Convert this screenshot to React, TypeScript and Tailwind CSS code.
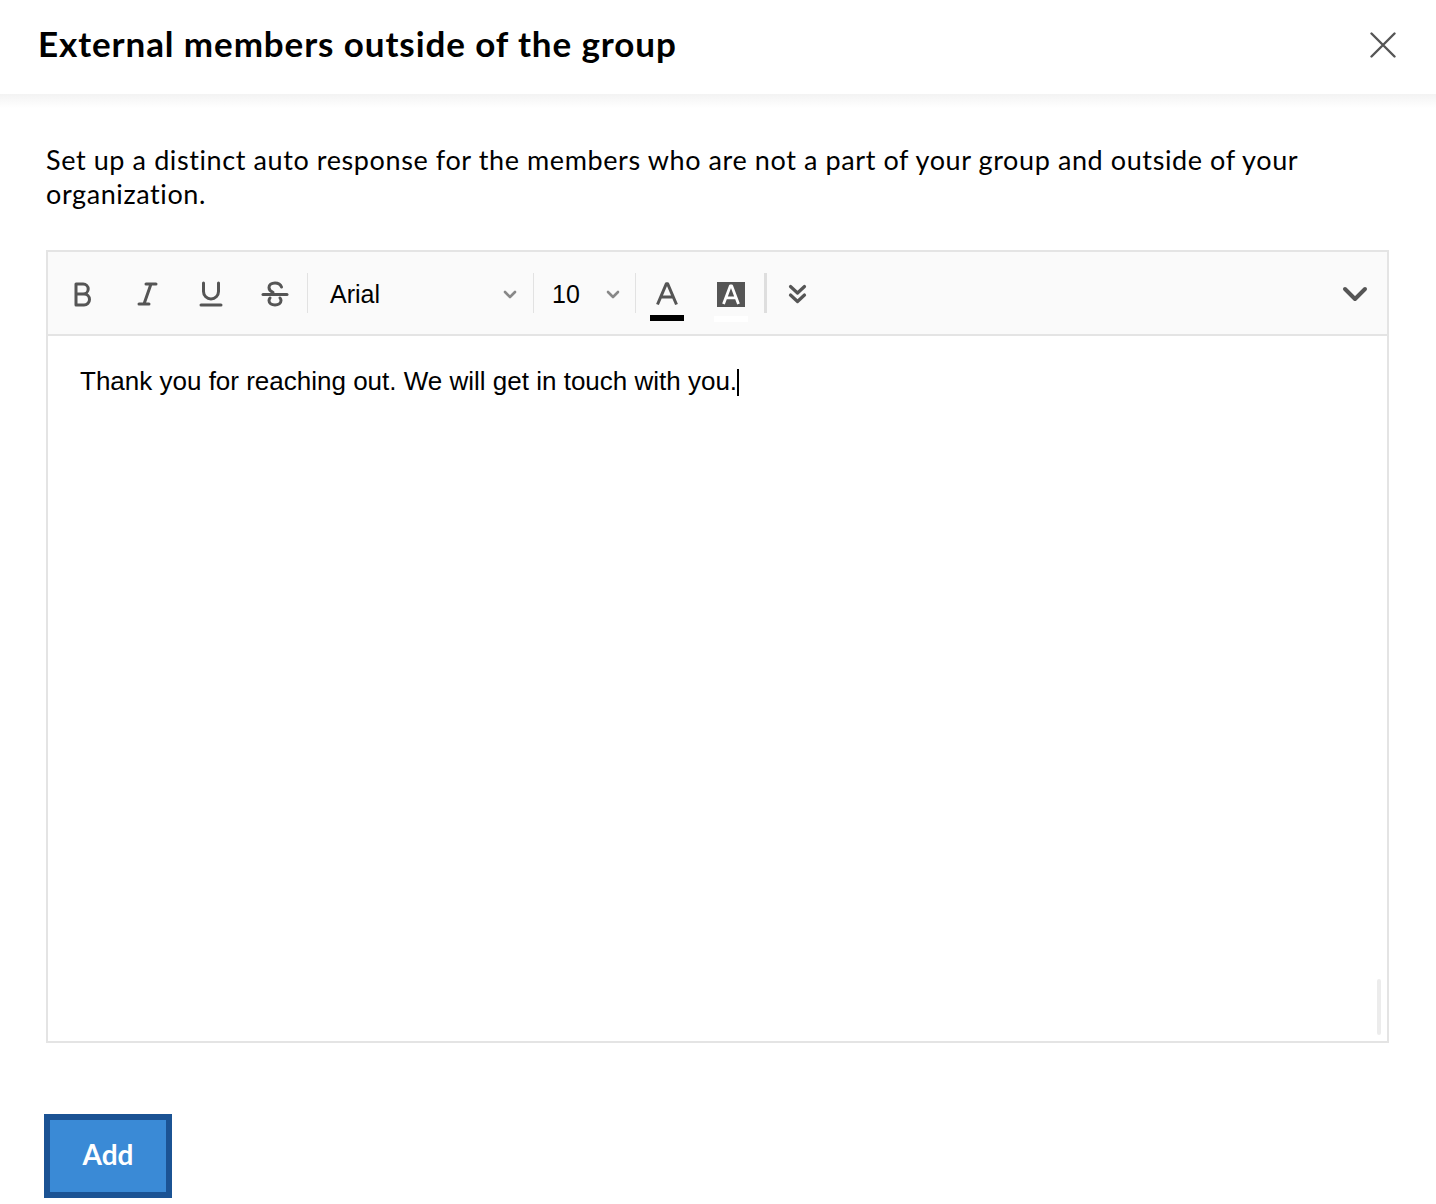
import React from "react";

const gray = "#555555";

const Sep = ({ dark }: { dark?: boolean }) => (
  <div className={dark ? "w-[3px] h-[40px] bg-[#dedede]" : "w-px h-[40px] bg-[#e2e2e2]"} />
);

const SmallChevron = () => (
  <svg width="14" height="9" viewBox="0 0 14 9" fill="none">
    <path d="M2 2l5 5 5-5" stroke="#888" strokeWidth="2.6" strokeLinecap="round" strokeLinejoin="round" />
  </svg>
);

const Toolbar = () => (
  <div className="flex items-center h-[84px] bg-[#fafafa] border-b-2 border-[#e4e4e4] pl-[3px]">
    <button className="w-[64px] h-full flex items-center justify-center pt-[2px]">
      <svg width="20" height="25" viewBox="0 0 20 25" fill="none">
        <path
          d="M3 2v21M3 2h7.2a5 5 0 0 1 0 10H3M3 12h8a5.5 5.5 0 0 1 0 11H3"
          stroke={gray}
          strokeWidth="3"
          strokeLinecap="round"
          strokeLinejoin="round"
        />
      </svg>
    </button>
    <button className="w-[64px] h-full flex items-center justify-center pt-[2px]">
      <svg width="21" height="24" viewBox="0 0 21 24" fill="none">
        <path d="M9 2h10M2 22h10M14 2L7 22" stroke={gray} strokeWidth="3" strokeLinecap="round" />
      </svg>
    </button>
    <button className="w-[64px] h-full flex items-center justify-center pt-[2px]">
      <svg width="24" height="26" viewBox="0 0 24 26" fill="none">
        <path d="M4.5 2v8.5a7.5 7.5 0 0 0 15 0V2" stroke={gray} strokeWidth="3" strokeLinecap="round" />
        <path d="M2 24h20" stroke={gray} strokeWidth="3" strokeLinecap="round" />
      </svg>
    </button>
    <button className="w-[64px] h-full flex items-center justify-center pt-[2px]">
      <svg width="28" height="26" viewBox="0 0 28 26" fill="none">
        <path
          d="M20.5 6C19.5 3.4 17.2 2 14 2 10.4 2 8 3.9 8 6.6c0 2.4 1.6 3.9 4 4.9"
          stroke={gray}
          strokeWidth="3"
          strokeLinecap="round"
        />
        <path d="M2 13.5h24" stroke={gray} strokeWidth="3" strokeLinecap="round" />
        <path
          d="M9 17c-.7.8-1 1.7-1 2.6C8 22.4 10.6 24 14 24s6-1.6 6-4.4c0-.9-.3-1.8-1-2.6"
          stroke={gray}
          strokeWidth="3"
          strokeLinecap="round"
        />
      </svg>
    </button>
    <Sep />
    <div className="w-[225px] h-full flex items-center justify-between pl-[22px] pr-[16px] pt-[2px]">
      <span className="text-[25px] text-black font-['Liberation_Sans',Arial,sans-serif] leading-none">Arial</span>
      <SmallChevron />
    </div>
    <Sep />
    <div className="w-[101px] h-full flex items-center justify-between pl-[18px] pr-[15px] pt-[2px]">
      <span className="text-[25px] text-black font-['Liberation_Sans',Arial,sans-serif] leading-none">10</span>
      <SmallChevron />
    </div>
    <Sep />
    <button className="w-[62px] h-full flex flex-col items-center justify-start pt-[30px]">
      <svg width="24" height="24" viewBox="0 0 24 24" fill="none">
        <path d="M2.5 22.5L11.3 1.8h1.4l8.8 20.7M6.5 15h11" stroke={gray} strokeWidth="3" strokeLinejoin="round" />
      </svg>
      <div className="w-[34px] h-[6px] bg-black mt-[9px]" />
    </button>
    <button className="w-[66px] h-full flex flex-col items-center justify-start pt-[30px]">
      <div className="w-[28px] h-[25px] bg-[#555] flex items-center justify-center">
        <svg width="20" height="21" viewBox="0 0 20 21" fill="none">
          <path d="M2.5 20L9.3 2h1.4L17.5 20M5.3 13.8h9.4" stroke="white" strokeWidth="2.8" strokeLinejoin="round" />
        </svg>
      </div>
      <div className="w-[34px] h-[6px] bg-white mt-[9px]" />
    </button>
    <Sep dark />
    <button className="w-[60px] h-full flex items-center justify-center pt-[2px]">
      <svg width="19" height="20" viewBox="0 0 19 20" fill="none">
        <path d="M2.5 2.5l7 6.5 7-6.5M2.5 11l7 6.5 7-6.5" stroke={gray} strokeWidth="3.2" strokeLinecap="round" strokeLinejoin="round" />
      </svg>
    </button>
    <div className="flex-1" />
    <button className="h-full flex items-center pr-[19px] pt-[2px]">
      <svg width="26" height="17" viewBox="0 0 26 17" fill="none">
        <path d="M3 3l10 10 10-10" stroke={gray} strokeWidth="4" strokeLinecap="round" strokeLinejoin="round" />
      </svg>
    </button>
  </div>
);

export default function App() {
  return (
    <div className="w-[1436px] h-[1204px] bg-white overflow-hidden font-['Lato','Noto_Sans',sans-serif] text-black">
      <div className="h-[94px] flex items-center justify-between pl-[38px] pr-[40px] pb-[4px]">
        <h1 className="text-[35px] font-bold leading-none tracking-[0.9px] -mt-[4px]">External members outside of the group</h1>
        <button className="w-[26px] h-[26px] flex items-center justify-center">
          <svg width="26" height="26" viewBox="0 0 26 26" fill="none">
            <path d="M1.5 1.5l23 23M24.5 1.5l-23 23" stroke={gray} strokeWidth="2.4" strokeLinecap="round" />
          </svg>
        </button>
      </div>
      <div className="h-[14px] bg-gradient-to-b from-[#f3f3f3] to-white" />

      <div className="px-[46px] pr-[47px] pt-[35px]">
        <p className="text-[27px] leading-[34px] tracking-[0.6px] pr-[60px]">
          Set up a distinct auto response for the members who are not a part of your group and outside of your organization.
        </p>

        <div className="mt-[39px] h-[793px] border-2 border-[#e4e4e4] flex flex-col">
          <Toolbar />
          <div className="flex-1 flex bg-white">
            <div className="flex-1 pl-[32px] pt-[29px] text-[26px] leading-[32px] font-['Liberation_Sans',Arial,sans-serif]">
              Thank you for reaching out. We will get in touch with you.
              <span className="inline-block w-[2px] h-[27px] bg-black align-[-6px]" />
            </div>
            <div className="w-[10px] flex flex-col justify-end pb-[6px]">
              <div className="w-[4px] h-[56px] rounded-full bg-[#ececec]" />
            </div>
          </div>
        </div>

        <button className="mt-[71px] -ml-[2px] w-[128px] h-[84px] border-[6px] border-[#1b5394] bg-[#3a8ad6] text-white text-[28px] font-bold flex items-center justify-center pb-[5px]">
          Add
        </button>
      </div>
    </div>
  );
}
